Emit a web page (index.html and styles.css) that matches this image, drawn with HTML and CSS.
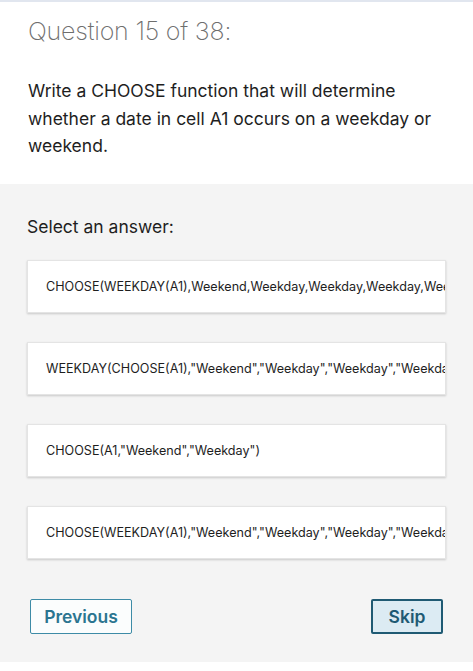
FILE: index.html
```html
<!DOCTYPE html>
<html>
<head>
<meta charset="utf-8">
<link rel="stylesheet" href="styles.css">
</head>
<body>
<div class="top">
  <h1 class="title">Question 15 of 38:</h1>
  <p class="question">Write a CHOOSE function that will determine whether a date in cell A1 occurs on a weekday or weekend.</p>
</div>
<div class="answers">
  <div class="prompt">Select an answer:</div>
  <div class="list">
    <div class="card"><span>CHOOSE(WEEKDAY(A1),Weekend,Weekday,Weekday,Weekday,Weekday,Weekday,Weekend)</span></div>
    <div class="card"><span>WEEKDAY(CHOOSE(A1),"Weekend","Weekday","Weekday","Weekday","Weekday","Weekday","Weekend")</span></div>
    <div class="card"><span>CHOOSE(A1,"Weekend","Weekday")</span></div>
    <div class="card"><span>CHOOSE(WEEKDAY(A1),"Weekend","Weekday","Weekday","Weekday","Weekday","Weekday","Weekend")</span></div>
  </div>
  <div class="nav">
    <button class="btn prev">Previous</button>
    <button class="btn skip">Skip</button>
  </div>
</div>
<div class="bottom"></div>
</body>
</html>
```
FILE: styles.css
```css
html, body {
  margin: 0;
  padding: 0;
  background: #ffffff;
  font-family: Inter, "Liberation Sans", sans-serif;
}
.top {
  border-top: 2px solid #e1e6ef;
  padding: 13px 28px 0 28px;
  height: 169px;
  background: #ffffff;
}
.title {
  margin: 0;
  font-size: 25px;
  font-weight: 200;
  color: #6e6e6e;
  letter-spacing: -0.2px;
  line-height: 32px;
}
.question {
  margin: 30px 0 0 0;
  font-size: 17.5px;
  line-height: 27.5px;
  color: #1e1e1e;
  font-weight: 400;
}
.answers {
  background: #f4f4f4;
  padding: 31px 27px 28px 27px;
  height: 419px;
}
.prompt {
  font-size: 17.5px;
  color: #1e1e1e;
  line-height: 24px;
}
.list {
  margin-top: 21px;
  display: flex;
  flex-direction: column;
  gap: 29px;
}
.card {
  background: #ffffff;
  height: 53px;
  width: 419px;
  box-sizing: border-box;
  border: 1px solid #e4e4e4;
  box-shadow: 0 1px 2px rgba(0,0,0,0.18);
  display: flex;
  align-items: center;
  padding-left: 18px;
  overflow: hidden;
  white-space: nowrap;
  font-size: 12.6px;
  color: #1e1e1e;
}
.nav {
  margin-top: 40px;
  display: flex;
  justify-content: space-between;
  padding: 0 3px 0 3px;
}
.btn {
  font-family: Inter, "Liberation Sans", sans-serif;
  font-size: 17.5px;
  font-weight: 600;
  height: 35px;
  box-sizing: border-box;
  border-radius: 2px;
  padding: 0;
}
.prev {
  width: 102px;
  background: #fbfdfd;
  border: 1.5px solid #3d8ba6;
  color: #2b7590;
}
.skip {
  width: 72px;
  background: #dcebf3;
  border: 2px solid #1f5a73;
  color: #1f5a73;
}
.bottom {
  height: 9px;
  background: #ffffff;
}
```
